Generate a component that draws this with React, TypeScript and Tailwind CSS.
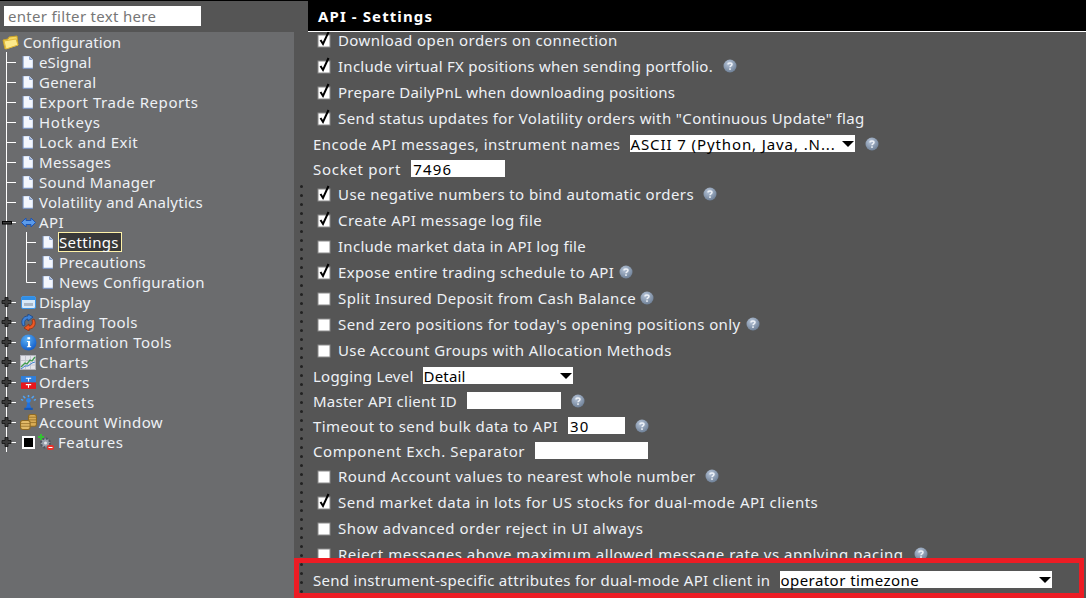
import React, { useId } from 'react'

const FONT = "font-['Noto_Sans',sans-serif]"

function PageIcon() {
  return (
    <svg width="12" height="14" viewBox="0 0 12 14" className="shrink-0">
      <path d="M1.5 1.5h6l3 3v8h-9z" fill="#f4f7fd" stroke="#d5e0f2" />
      <path d="M7.5 1.5v3h3" fill="#9fb4d8" stroke="#8ea6d0" />
      <path d="M1 1v12.500h10" fill="none" stroke="#7f95c0" />
    </svg>
  )
}

function FolderIcon() {
  return (
    <svg width="17" height="17" viewBox="0 0 17 17" className="shrink-0">
      <path d="M1 6l5-1 1-2 8-1 1 9-13 4z" fill="#f6d860" stroke="#c9a227" />
      <path d="M2 7l12-2 2 6-12 4z" fill="#fde98c" stroke="#e1b93a" />
    </svg>
  )
}

function ApiIcon() {
  return (
    <svg width="15" height="11" viewBox="0 0 15 11" className="shrink-0">
      <path d="M0.5 5.5L5 1v2.5h5V1l4.500 4.500L10 10V7.500H5V10z" fill="#5b9bea" stroke="#1d55b5" />
    </svg>
  )
}

function DisplayIcon() {
  return (
    <svg width="15" height="13" viewBox="0 0 15 13" className="shrink-0">
      <rect x="0.5" y="0.500" width="14" height="12" rx="1.500" fill="#d8e8f8" stroke="#3c94e8" />
      <rect x="1" y="1" width="13" height="3" fill="#2f8ee6" />
      <rect x="3" y="7" width="9" height="3" fill="#a9b6c6" />
    </svg>
  )
}

function TradingIcon() {
  return (
    <svg width="17" height="17" viewBox="0 0 17 17" className="shrink-0">
      <path d="M3 12C0 7 3 2 8 2V0l5 3-5 4V5C5 5 4 8 5 11z" fill="#3f83d6" stroke="#123f85" strokeWidth="0.700" />
      <path d="M14 5c3 5 0 10-5 10v2l-5-3 5-4v2c3 0 4-3 3-6z" fill="#ef5a24" stroke="#8d2a0a" strokeWidth="0.700" />
    </svg>
  )
}

function InfoIcon() {
  const id = useId()
  return (
    <svg width="17" height="17" viewBox="0 0 16 16" className="shrink-0">
      <defs>
        <radialGradient id={id} cx="0.4" cy="0.3" r="0.8">
          <stop offset="0" stopColor="#5bb1f5" />
          <stop offset="1" stopColor="#0b54c4" />
        </radialGradient>
      </defs>
      <circle cx="8" cy="8" r="7.500" fill={`url(#${id})`} />
      <rect x="7" y="3" width="2.500" height="2" fill="#fff" />
      <path d="M6.500 6.500h3v5h1v1h-4v-1h1v-4h-1z" fill="#fff" />
    </svg>
  )
}

function ChartIcon() {
  return (
    <svg width="16" height="15" viewBox="0 0 16 15" className="shrink-0">
      <rect x="0.500" y="0.500" width="15" height="14" fill="#e4e4ea" stroke="#b4b4bc" />
      <path d="M5.500 1v13M10.500 1v13M1 5.500h14M1 10h14" stroke="#c4c6d0" />
      <path d="M1 12l4-4 2 1 3-4 2 1 3-4" fill="none" stroke="#3f9c4d" strokeWidth="1.300" />
      <path d="M1 14l4-3 3 0 4-3 3-1" fill="none" stroke="#3f7fd0" />
    </svg>
  )
}

function OrdersIcon() {
  return (
    <svg width="15" height="13" viewBox="0 0 14 12" className="shrink-0">
      <rect width="14" height="6" fill="#2f7fdc" />
      <rect y="6" width="14" height="6" fill="#e8161c" />
      <path d="M4.500 2h5M7 2v3M4.500 8h5M7 8v3" stroke="#fff" />
    </svg>
  )
}

function PresetsIcon() {
  return (
    <svg width="17" height="15" viewBox="0 0 16 14" className="shrink-0">
      <path d="M5 13l1-2 1-4h2l1 4 1 2z" fill="#1f70e0" />
      <rect x="4" y="12" width="8" height="2" fill="#1558b8" />
      <circle cx="8" cy="5" r="2.200" fill="#2e86ec" />
      <path d="M8 0v2M3 1l2 2M13 1l-2 2M1 4l2 1M15 4l-2 1" stroke="#52a4f4" strokeWidth="1.400" />
    </svg>
  )
}

function CoinsIcon() {
  return (
    <svg width="17" height="16" viewBox="0 0 16 15" className="shrink-0">
      <rect x="8" y="0.500" width="7.500" height="11" rx="2" fill="#d9ac55" stroke="#8f6a24" />
      <path d="M8 3h7.500M8 5.500h7.500M8 8h7.500" stroke="#8f6a24" strokeWidth="0.700" />
      <rect x="0.500" y="6" width="9" height="8.500" rx="2" fill="#e2ba68" stroke="#8f6a24" />
      <path d="M0.500 9h9M0.500 11.500h9" stroke="#8f6a24" strokeWidth="0.700" />
    </svg>
  )
}

function FeaturesIcon() {
  return (
    <svg width="16" height="16" viewBox="0 0 16 16" className="shrink-0">
      <circle cx="7.500" cy="9" r="4.500" fill="#98a0ac" stroke="#4e5560" strokeWidth="2" strokeDasharray="2 1.500" />
      <circle cx="7.500" cy="9" r="1.500" fill="#e2e4e8" />
      <path d="M0 3h6M3 0v6" stroke="#33c233" strokeWidth="2" />
      <rect x="9" y="11" width="7" height="5" rx="2" fill="#e8322a" />
      <rect x="10.500" y="13" width="4" height="1" fill="#fff" />
    </svg>
  )
}

// tree connector: corner ends the branch, box draws the +/- expander
function Connector({ box, corner }: { box?: 'plus' | 'minus'; corner?: boolean }) {
  return (
    <svg width="17" height="20" viewBox="0 0 17 20" className="shrink-0">
      <path d={corner ? 'M6.500 0v10.500H16' : 'M6.500 0v20M7 10.500h9'} stroke="#fff" fill="none" />
      {box === 'plus' && (
        <path d="M5 6h3v3h3v3H8v3H5v-3H2V9h3z" fill="#3a3a3a" stroke="#111" strokeWidth="0.800" transform="translate(0 -0.500)" />
      )}
      {box === 'minus' && <rect x="2.500" y="9.500" width="9" height="2.500" fill="#3a3a3a" stroke="#000" />}
    </svg>
  )
}

function TreeRow({
  label,
  icon,
  box,
  track,
}: {
  label: string
  icon: React.ReactNode
  box?: 'plus' | 'minus'
  track?: string
}) {
  return (
    <div className="flex h-5 items-center">
      <Connector box={box} />
      <span className="flex w-[22px] shrink-0 items-center justify-center">{icon}</span>
      <span className={`whitespace-nowrap ${track ?? ''}`}>{label}</span>
    </div>
  )
}

function ChildRow({ label, active, last, track }: { label: string; active?: boolean; last?: boolean; track?: string }) {
  return (
    <div className="flex h-5 items-center">
      <svg width="20" height="20" viewBox="0 0 20 20" className="shrink-0">
        <path d="M6.500 0v20" stroke="#fff" />
      </svg>
      <Connector corner={last} />
      <span className="ml-[5px] flex w-[17px] shrink-0 items-center">
        <PageIcon />
      </span>
      {active ? (
        <span className={`-ml-[1px] flex h-5 items-center whitespace-nowrap border border-[#fff2a8] bg-[#383838] pr-[2px] text-white ${track ?? ''}`}>
          {label}
        </span>
      ) : (
        <span className={`whitespace-nowrap ${track ?? ''}`}>{label}</span>
      )}
    </div>
  )
}

function Help({ gap = 0 }: { gap?: number }) {
  const id = useId()
  return (
    <svg width="14" height="14" viewBox="0 0 14 14" className="shrink-0" style={{ marginLeft: gap }}>
      <defs>
        <radialGradient id={id} cx="0.4" cy="0.3" r="0.8">
          <stop offset="0" stopColor="#b6c4d8" />
          <stop offset="1" stopColor="#66788f" />
        </radialGradient>
      </defs>
      <circle cx="7" cy="7" r="6.500" fill={`url(#${id})`} />
      <path d="M5 5.500C5 3.500 9 3.500 9 5.500C9 7 7 6.800 7 8.300" fill="none" stroke="#eef2f7" strokeWidth="1.500" />
      <rect x="6.200" y="9.300" width="1.600" height="1.600" fill="#eef2f7" />
    </svg>
  )
}

function Check({ checked }: { checked?: boolean }) {
  return (
    <svg width="14" height="18" viewBox="0 0 14 18" className="mr-[7px] shrink-0">
      <rect x="1" y="4" width="12" height="12" fill="#fff" stroke="#8a8a8a" />
      {checked && <path d="M3.500 9l2.500 4L11.500 1" fill="none" stroke="#000" strokeWidth="2" />}
    </svg>
  )
}

function CheckRow({ label, checked, help, track }: { label: string; checked?: boolean; help?: number; track?: string }) {
  return (
    <div className="flex h-[26px] items-center pl-[23px]">
      <Check checked={checked} />
      <span className={`whitespace-nowrap leading-4 ${track ?? ''}`}>{label}</span>
      {help !== undefined && <Help gap={help} />}
    </div>
  )
}

function Select({ value, width, track }: { value: string; width: string; track?: string }) {
  return (
    <div className={`flex h-[17px] shrink-0 items-center justify-between bg-white pr-[1px] text-black ${width}`}>
      <span className={`whitespace-nowrap ${track ?? ''}`}>{value}</span>
      <svg width="12" height="6" viewBox="0 0 12 6" className="shrink-0">
        <path d="M0 0h12L6 6z" fill="#000" />
      </svg>
    </div>
  )
}

function TextBox({ value, width }: { value?: string; width: string }) {
  return (
    <input
      readOnly
      value={value ?? ''}
      className={`h-[17px] shrink-0 bg-white pl-[2px] tracking-[1.2px] text-black outline-none ${width}`}
    />
  )
}

function FormRow({
  label,
  children,
  h = 'h-[25px]',
  track,
}: {
  label: string
  children: React.ReactNode
  h?: string
  track?: string
}) {
  return (
    <div className={`flex items-center gap-[10px] pl-[19px] ${h}`}>
      <span className={`whitespace-nowrap ${track ?? ''}`}>{label}</span>
      {children}
    </div>
  )
}

const DOTS = Array.from({ length: 46 }, (_, i) => i)

export default function App() {
  return (
    <div className={`relative h-[604px] w-[1086px] overflow-hidden bg-white ${FONT} text-[15px] leading-5 tracking-[0.45px] text-[#eef1f5]`}>
      <div className="h-px bg-black" />
      <div className="flex h-[597px]">
        {/* Left tree */}
        <div className="flex w-[294px] shrink-0 flex-col bg-[#555555]">
          <div className="flex h-[31px] shrink-0 items-start pt-[5px] pl-1">
            <input
              readOnly
              placeholder="enter filter text here"
              className="h-5 w-[197px] bg-white pl-1 tracking-[0.31px] text-[#777] outline-none placeholder:text-[#777]"
            />
          </div>
          <div className="flex-1 bg-[#6b6c6e]">
            <div className="flex h-5 items-center pl-[2px]">
              <FolderIcon />
              <span className="ml-1 tracking-[0.07px]">Configuration</span>
            </div>
            <TreeRow label="eSignal" icon={<PageIcon />} track="tracking-[0.16px]" />
            <TreeRow label="General" icon={<PageIcon />} track="tracking-[0.31px]" />
            <TreeRow label="Export Trade Reports" icon={<PageIcon />} track="tracking-[0.55px]" />
            <TreeRow label="Hotkeys" icon={<PageIcon />} track="tracking-[0.74px]" />
            <TreeRow label="Lock and Exit" icon={<PageIcon />} track="tracking-[0.53px]" />
            <TreeRow label="Messages" icon={<PageIcon />} track="tracking-[0.33px]" />
            <TreeRow label="Sound Manager" icon={<PageIcon />} track="tracking-[0.3px]" />
            <TreeRow label="Volatility and Analytics" icon={<PageIcon />} track="tracking-[0.28px]" />
            <TreeRow label="API" icon={<ApiIcon />} box="minus" />
            <ChildRow label="Settings" active track="tracking-[0.35px]" />
            <ChildRow label="Precautions" track="tracking-[0.36px]" />
            <ChildRow label="News Configuration" last track="tracking-[0.34px]" />
            <TreeRow label="Display" icon={<DisplayIcon />} box="plus" track="tracking-[0.02px]" />
            <TreeRow label="Trading Tools" icon={<TradingIcon />} box="plus" track="tracking-[0.37px]" />
            <TreeRow label="Information Tools" icon={<InfoIcon />} box="plus" />
            <TreeRow label="Charts" icon={<ChartIcon />} box="plus" track="tracking-[0.62px]" />
            <TreeRow label="Orders" icon={<OrdersIcon />} box="plus" track="tracking-[0.28px]" />
            <TreeRow label="Presets" icon={<PresetsIcon />} box="plus" track="tracking-[0.59px]" />
            <TreeRow label="Account Window" icon={<CoinsIcon />} box="plus" />
            <div className="flex h-5 items-center">
              <Connector box="plus" />
              <span className="ml-[5px] flex h-[13px] w-[13px] shrink-0 items-center justify-center border border-white bg-white">
                <span className="h-[9px] w-[9px] bg-black" />
              </span>
              <span className="ml-[3px] flex w-[20px] shrink-0 items-center">
                <FeaturesIcon />
              </span>
              <span className="whitespace-nowrap tracking-[0.57px]">Features</span>
            </div>
          </div>
        </div>

        {/* Settings */}
        <div className="flex min-w-0 flex-1 flex-col bg-[#555555]">
          <div className="ml-[14px] flex h-[31px] shrink-0 items-center border-b border-white bg-black pl-[10px] font-bold tracking-[1.1px] text-white">
            API - Settings
          </div>
          <div className="min-h-0 flex-1 overflow-hidden">
            <div className="-mt-[5px]">
              <CheckRow checked label="Download open orders on connection" track="tracking-[0.42px]" />
              <CheckRow checked label="Include virtual FX positions when sending portfolio." help={10} track="tracking-[0.26px]" />
              <CheckRow checked label="Prepare DailyPnL when downloading positions" track="tracking-[0.24px]" />
              <CheckRow checked label={'Send status updates for Volatility orders with "Continuous Update" flag'} track="tracking-[0.39px]" />
              <FormRow label="Encode API messages, instrument names" track="tracking-[0.45px]">
                <Select value="ASCII 7 (Python, Java, .N..." width="w-[225px]" track="tracking-[0.9px]" />
                <Help />
              </FormRow>
              <FormRow label="Socket port" track="tracking-[0.72px]">
                <TextBox value="7496" width="w-[94px]" />
              </FormRow>
              <CheckRow checked label="Use negative numbers to bind automatic orders" help={9} track="tracking-[0.41px]" />
              <CheckRow checked label="Create API message log file" />
              <CheckRow label="Include market data in API log file" track="tracking-[0.28px]" />
              <CheckRow checked label="Expose entire trading schedule to API" help={5} track="tracking-[0.34px]" />
              <CheckRow label="Split Insured Deposit from Cash Balance" help={4} track="tracking-[0.4px]" />
              <CheckRow label="Send zero positions for today's opening positions only" help={5} track="tracking-[0.41px]" />
              <CheckRow label="Use Account Groups with Allocation Methods" track="tracking-[0.4px]" />
              <FormRow label="Logging Level" track="tracking-[0.22px]">
                <Select value="Detail" width="w-[150px]" track="tracking-[0.2px]" />
              </FormRow>
              <FormRow label="Master API client ID" track="tracking-[0.25px]">
                <TextBox width="w-[94px]" />
                <Help />
              </FormRow>
              <FormRow label="Timeout to send bulk data to API" track="tracking-[0.45px]">
                <TextBox value="30" width="w-[57px]" />
                <Help />
              </FormRow>
              <FormRow label="Component Exch. Separator" track="tracking-[0.61px]">
                <TextBox width="w-[113px]" />
              </FormRow>
              <CheckRow label="Round Account values to nearest whole number" help={9} />
              <CheckRow checked label="Send market data in lots for US stocks for dual-mode API clients" track="tracking-[0.5px]" />
              <CheckRow label="Show advanced order reject in UI always" track="tracking-[0.55px]" />
              <CheckRow label="Reject messages above maximum allowed message rate vs applying pacing" help={10} track="tracking-[0.51px]" />
            </div>
          </div>
          <FormRow label="Send instrument-specific attributes for dual-mode API client in" h="h-[35px] shrink-0 pb-[2px]" track="tracking-[0.3px]">
            <Select value="operator timezone" width="w-[272px]" />
          </FormRow>
        </div>
      </div>

      {/* splitter dots */}
      <div className="absolute top-[185px] left-[300px] flex flex-col gap-[6px]">
        {DOTS.map((d) => (
          <span key={d} className="h-[3px] w-[3px] rounded-full bg-[#222]" />
        ))}
      </div>

      {/* red annotation box */}
      <div className="absolute top-[558px] left-[294px] h-[40px] w-[790px] border-[5px] border-[#ed1c24]" />
    </div>
  )
}
